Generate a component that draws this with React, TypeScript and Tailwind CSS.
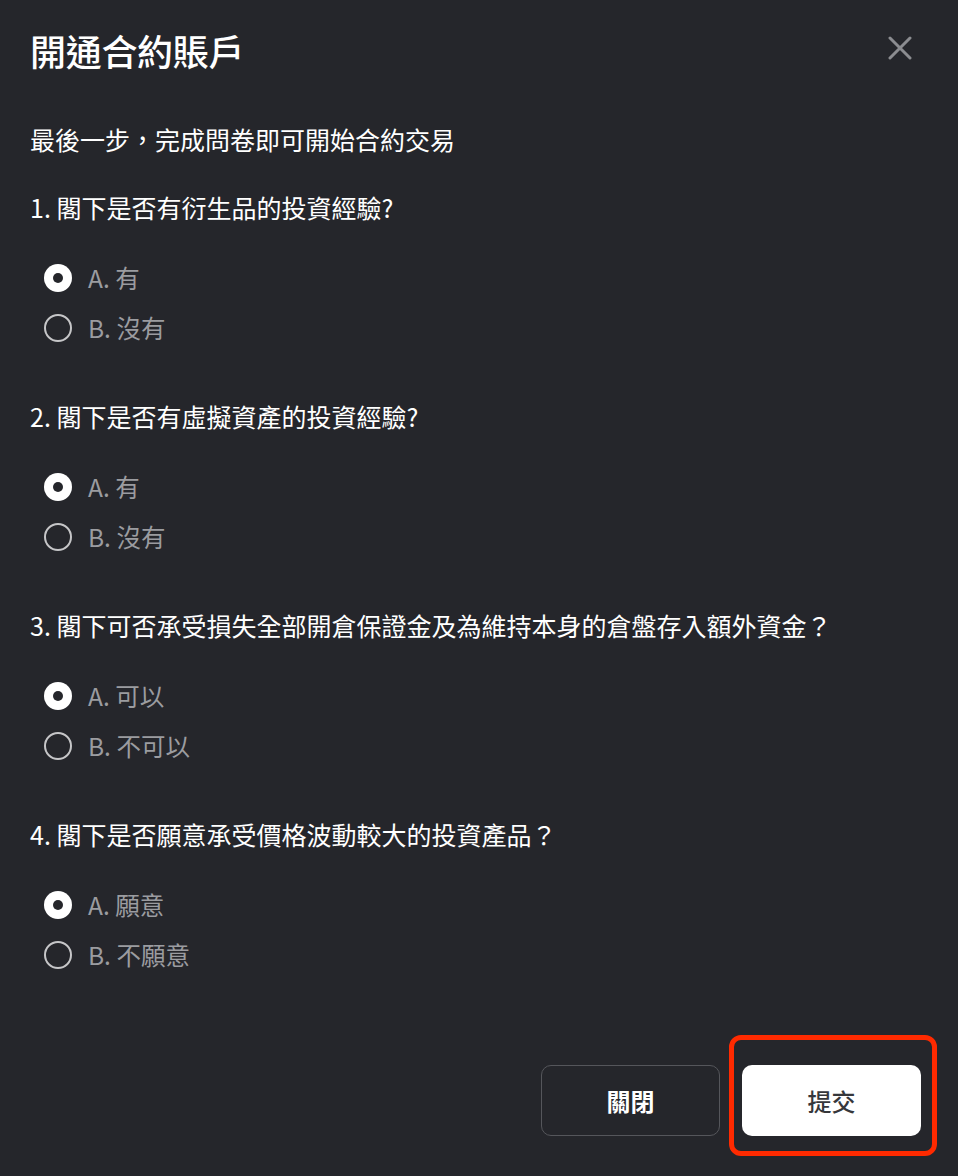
import { useState } from 'react';

const FONT = "font-['Noto_Sans_CJK_TC','Noto_Sans',sans-serif]";

const QUESTIONS = [
  { q: '1. 閣下是否有衍生品的投資經驗?', options: ['A. 有', 'B. 沒有'] },
  { q: '2. 閣下是否有虛擬資產的投資經驗?', options: ['A. 有', 'B. 沒有'] },
  { q: '3. 閣下可否承受損失全部開倉保證金及為維持本身的倉盤存入額外資金？', options: ['A. 可以', 'B. 不可以'] },
  { q: '4. 閣下是否願意承受價格波動較大的投資產品？', options: ['A. 願意', 'B. 不願意'] },
];

function Radio({ checked }: { checked: boolean }) {
  if (checked) {
    return (
      <span className="w-[28px] h-[28px] rounded-full bg-white flex items-center justify-center shrink-0">
        <span className="w-[10px] h-[10px] rounded-full bg-[#25262b]" />
      </span>
    );
  }
  return <span className="w-[28px] h-[28px] rounded-full border-[2.5px] border-[#c6c6c8] shrink-0" />;
}

export default function App() {
  const [answers, setAnswers] = useState<number[]>([0, 0, 0, 0]);

  return (
    <div className={`w-[958px] h-[1176px] bg-[#25262b] text-white flex flex-col ${FONT}`}>
      {/* 標題列 */}
      <div className="h-[100px] pl-[30px] pr-[46px] flex items-center justify-between">
        <h1 className="text-[36px] leading-none font-medium tracking-[-0.3px]">開通合約賬戶</h1>
        <button aria-label="close" className="w-[24px] h-[24px] flex items-center justify-center -mt-[4px]">
          <svg width="24" height="24" viewBox="0 0 24 24" fill="none">
            <path d="M2 2L22 22M22 2L2 22" stroke="#8b8c90" strokeWidth="3" strokeLinecap="round" />
          </svg>
        </button>
      </div>

      <div className="px-[30px] flex flex-col">
        <p className="mt-[21px] text-[25px] leading-[36px] text-white">最後一步，完成問卷即可開始合約交易</p>

        <div className="mt-[32px] flex flex-col gap-[45px]">
          {QUESTIONS.map((item, qi) => (
            <div key={qi} className="flex flex-col">
              <div className="text-[25px] leading-[36px] text-white whitespace-nowrap">{item.q}</div>
              <div className="mt-[28px] flex flex-col pl-[14px]">
                {item.options.map((opt, oi) => (
                  <label
                    key={oi}
                    className="h-[50px] flex items-center gap-[16px] cursor-pointer"
                    onClick={() => setAnswers((a) => a.map((v, i) => (i === qi ? oi : v)))}
                  >
                    <Radio checked={answers[qi] === oi} />
                    <span className="text-[24.5px] leading-none text-[#9b9ca0]">{opt}</span>
                  </label>
                ))}
              </div>
            </div>
          ))}
        </div>
      </div>

      {/* 按鈕 */}
      <div className="mt-auto mb-[40px] pr-[37px] flex justify-end gap-[22px]">
        <button className="w-[179px] h-[71px] rounded-[10px] border border-[#55565b] text-[24px] font-bold text-white">
          關閉
        </button>
        <div className="relative">
          <button className="w-[179px] h-[71px] rounded-[10px] bg-white text-[24px] font-medium text-[#36373b]">
            提交
          </button>
          <span className="absolute -left-[13px] -right-[16px] -top-[30px] -bottom-[20px] border-[5px] border-[#ff2a00] rounded-[12px] pointer-events-none" />
        </div>
      </div>
    </div>
  );
}
